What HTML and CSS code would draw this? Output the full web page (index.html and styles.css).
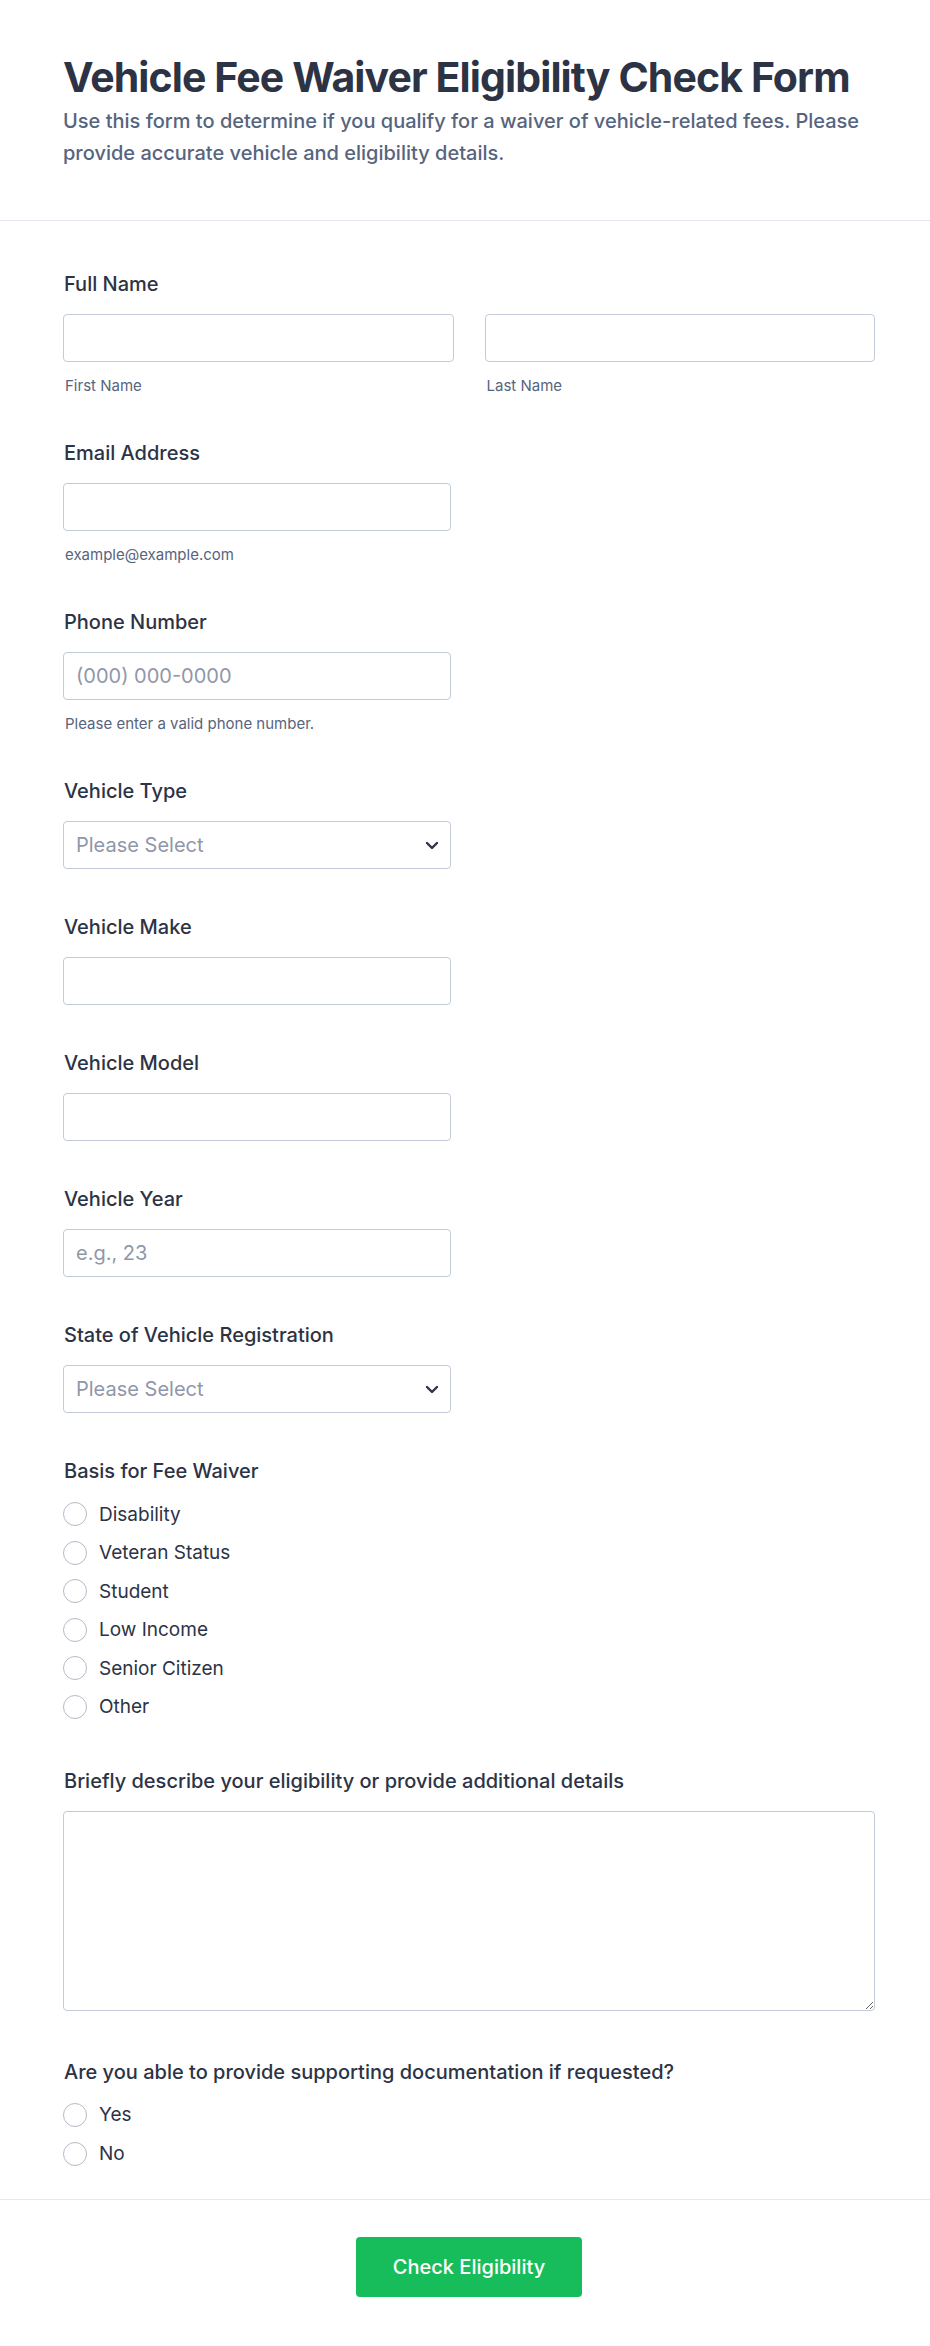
FILE: index.html
```html
<!DOCTYPE html>
<html lang="en">
<head>
  <meta charset="UTF-8" />
  <meta name="viewport" content="width=device-width, initial-scale=1.0"/>
  <title>Vehicle Fee Waiver Eligibility Check Form</title>
  <link rel="stylesheet" href="styles.css">
</head>
<body>

  <!-- Header -->
  <header class="form-header">
    <h1>Vehicle Fee Waiver Eligibility Check Form</h1>
    <p>Use this form to determine if you qualify for a waiver of vehicle-related fees. Please provide accurate vehicle and eligibility details.</p>
  </header>

  <form class="form-body" onsubmit="event.preventDefault()">
    <div class="field">
      <label class="field-label">Full Name</label>
      <div class="name-row">
        <div class="name-col">
          <input type="text" class="text-input full" />
          <span class="sublabel">First Name</span>
        </div>
        <div class="name-col">
          <input type="text" class="text-input full" />
          <span class="sublabel">Last Name</span>
        </div>
      </div>
    </div>

    <div class="field">
      <label class="field-label">Email Address</label>
      <input type="email" class="text-input" />
      <span class="sublabel">example@example.com</span>
    </div>

    <div class="field">
      <label class="field-label">Phone Number</label>
      <input type="tel" class="text-input" placeholder="(000) 000-0000" />
      <span class="sublabel">Please enter a valid phone number.</span>
    </div>

    <div class="field">
      <label class="field-label">Vehicle Type</label>
      <div class="select-wrap">
        <select class="text-input select">
          <option>Please Select</option>
          <option>Car</option>
          <option>Motorcycle</option>
          <option>Truck</option>
        </select>
        <svg class="chevron" width="14" height="9" viewBox="0 0 14 9"><path d="M2 2l5 5 5-5" fill="none" stroke="#2c3345" stroke-width="2.4" stroke-linecap="round" stroke-linejoin="round"/></svg>
      </div>
    </div>

    <div class="field">
      <label class="field-label">Vehicle Make</label>
      <input type="text" class="text-input" />
    </div>

    <div class="field">
      <label class="field-label">Vehicle Model</label>
      <input type="text" class="text-input" />
    </div>

    <div class="field">
      <label class="field-label">Vehicle Year</label>
      <input type="text" class="text-input" placeholder="e.g., 23" />
    </div>

    <div class="field">
      <label class="field-label">State of Vehicle Registration</label>
      <div class="select-wrap">
        <select class="text-input select">
          <option>Please Select</option>
          <option>Alabama</option>
          <option>Alaska</option>
          <option>Arizona</option>
        </select>
        <svg class="chevron" width="14" height="9" viewBox="0 0 14 9"><path d="M2 2l5 5 5-5" fill="none" stroke="#2c3345" stroke-width="2.4" stroke-linecap="round" stroke-linejoin="round"/></svg>
      </div>
    </div>

    <div class="field">
      <label class="field-label">Basis for Fee Waiver</label>
      <div class="options">
        <label class="option"><input type="radio" name="basis" /> Disability</label>
        <label class="option"><input type="radio" name="basis" /> Veteran Status</label>
        <label class="option"><input type="radio" name="basis" /> Student</label>
        <label class="option"><input type="radio" name="basis" /> Low Income</label>
        <label class="option"><input type="radio" name="basis" /> Senior Citizen</label>
        <label class="option"><input type="radio" name="basis" /> Other</label>
      </div>
    </div>

    <div class="field field-long">
      <label class="field-label">Briefly describe your eligibility or provide additional details</label>
      <textarea class="text-input textarea"></textarea>
    </div>

    <div class="field">
      <label class="field-label">Are you able to provide supporting documentation if requested?</label>
      <div class="options">
        <label class="option"><input type="radio" name="docs" /> Yes</label>
        <label class="option"><input type="radio" name="docs" /> No</label>
      </div>
    </div>
  </form>

  <div class="form-footer">
    <button type="button">Check Eligibility</button>
  </div>

</body>
</html>
```

FILE: styles.css
```css
* { box-sizing: border-box; }
body {
  margin: 0;
  font-family: Inter, 'Noto Sans', sans-serif;
  color: #2c3345;
  background: #fff;
}

/* header */
.form-header {
  padding: 53px 55px 51px 63px;
  border-bottom: 1px solid #e3e6ee;
}
.form-header h1 {
  margin: 0;
  font-size: 41px;
  line-height: 48px;
  font-weight: 700;
  letter-spacing: -0.022em;
  white-space: nowrap;
}
.form-header p {
  margin: 4px 0 0;
  font-size: 20px;
  line-height: 32px;
  font-weight: 500;
  color: #57647e;
}

/* fields */
.form-body { padding: 51px 55px 0 63px; }
.field { margin-bottom: 46px; }
.field.field-long { margin-bottom: 49px; }
.field:last-child { margin-bottom: 29px; }
.field-label {
  display: block;
  font-size: 20px;
  line-height: 24px;
  font-weight: 500;
  margin-bottom: 18px;
  padding-left: 1px;
}
.text-input {
  display: block;
  width: 388px;
  height: 48px;
  padding: 0 12px;
  border: 1px solid #c3cad8;
  border-radius: 4px;
  background: #fff;
  font-family: inherit;
  font-size: 20px;
  color: #2c3345;
  outline: none;
}
.text-input::placeholder { color: #8f97a9; }
.text-input.full { width: 100%; }
.name-row { display: flex; gap: 31px; }
.name-col { flex: 1; }
.sublabel {
  display: block;
  margin-top: 15px;
  padding-left: 2px;
  font-size: 15px;
  line-height: 18px;
  color: #57647e;
}

.select-wrap { position: relative; width: 388px; }
.select {
  appearance: none;
  -webkit-appearance: none;
  color: #8f97a9;
}
.chevron {
  position: absolute;
  right: 12px;
  top: 20px;
}

.textarea {
  width: 100%;
  height: 200px;
  padding: 12px;
  resize: vertical;
}

/* radios */
.options {
  display: flex;
  flex-direction: column;
  gap: 12.6px;
  padding-bottom: 3px;
}
.option {
  display: flex;
  align-items: center;
  gap: 12px;
  height: 26px;
  font-size: 19px;
  color: #2c3345;
}
.option input {
  appearance: none;
  -webkit-appearance: none;
  margin: 0;
  width: 24px;
  height: 24px;
  border: 1px solid #b4bac7;
  border-radius: 50%;
  background: #fff;
}

/* footer */
.form-footer {
  display: flex;
  justify-content: center;
  padding: 37px 55px 49px 63px;
  border-top: 1px solid #e6e9f0;
}
.form-footer button {
  height: 60px;
  padding: 0 37px;
  border: none;
  border-radius: 4px;
  background: #18bd5b;
  color: #fff;
  font-family: inherit;
  font-size: 20px;
  font-weight: 500;
  cursor: pointer;
}
```
